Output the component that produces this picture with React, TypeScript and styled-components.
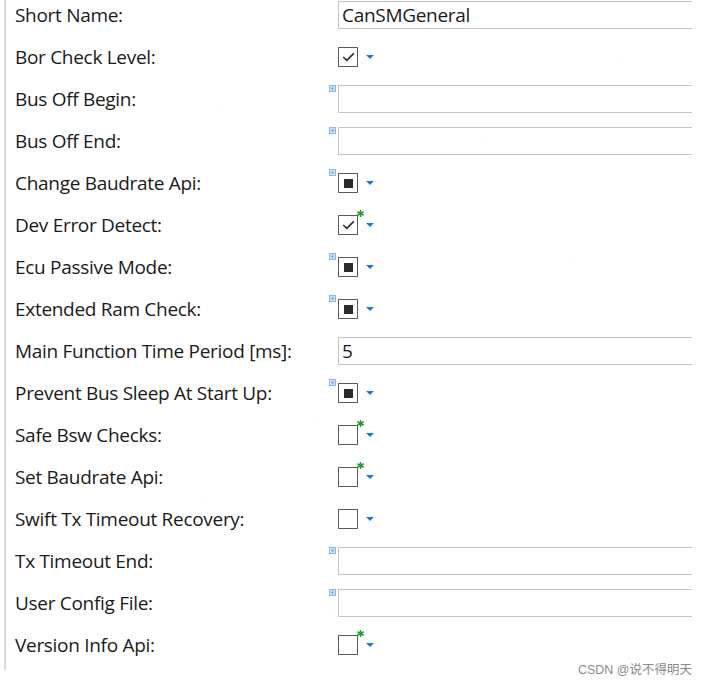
import { createGlobalStyle, styled } from "styled-components";

const GlobalStyle = createGlobalStyle`
    html, body {
        margin: 0;
        padding: 0;
        background: #ffffff;
    }
    body {
        font-family: "Open Sans", "Noto Sans", "Noto Sans CJK SC", sans-serif;
        color: #1a1a1a;
    }
`;

const Page = styled.div`
    position: relative;
    width: 702px;
    height: 684px;
    overflow: hidden;
    background: #ffffff;
`;

const Panel = styled.div`
    margin-left: 4px;
    margin-top: -6px;
    border-left: 2px solid #d9d9d9;
    height: 676px;
    display: flex;
    flex-direction: column;
`;

const Row = styled.div`
    height: 42px;
    display: grid;
    grid-template-columns: 332px 354px;
    align-items: center;
`;

const Label = styled.span`
    padding-left: 9px;
    font-size: 19px;
    letter-spacing: -0.3px;
    white-space: nowrap;
`;

const Cell = styled.div`
    position: relative;
    display: flex;
    align-items: center;
    height: 100%;
`;

const TextBox = styled.div`
    box-sizing: border-box;
    width: 354px;
    height: 28px;
    border: 1px solid #c4c4c4;
    border-right: none;
    padding-left: 3px;
    display: flex;
    align-items: center;
    font-size: 19px;
    letter-spacing: -0.3px;
`;

const Box = styled.div`
    position: relative;
    box-sizing: border-box;
    width: 20px;
    height: 20px;
    border: 1.7px solid #5a5a5a;
    display: flex;
    align-items: center;
    justify-content: center;
`;

const Filled = styled.div`
    width: 9px;
    height: 9px;
    background: #2b2b2b;
`;

const Arrow = styled.span`
    margin-left: 8px;
    width: 0;
    height: 0;
    border-left: 4px solid transparent;
    border-right: 4px solid transparent;
    border-top: 4.5px solid #1c78d4;
`;

const Marker = styled.svg`
    position: absolute;
    left: -9px;
    top: 7px;
    width: 7px;
    height: 7px;
`;

const BoxMarker = styled(Marker)`
    left: -10px;
    top: -5px;
`;

const Star = styled.svg`
    position: absolute;
    right: -7px;
    top: -6px;
    width: 7px;
    height: 7px;
`;

const Watermark = styled.span<{ $x: number; $y: number }>`
    position: absolute;
    left: ${(p) => p.$x}px;
    top: ${(p) => p.$y}px;
    font-size: 9px;
    color: rgba(0, 0, 0, 0.035);
    transform: rotate(-13deg);
    white-space: nowrap;
    font-family: "Open Sans", "Noto Sans CJK SC", sans-serif;
    pointer-events: none;
`;

const Credit = styled.span`
    position: absolute;
    right: 10px;
    bottom: 6px;
    font-size: 12.5px;
    color: #8a8a8a;
    font-family: "Liberation Sans", "Noto Sans CJK SC", sans-serif;
`;

type Check = "check" | "filled" | "empty";

type Field =
    | { label: string; kind: "text"; value?: string; marker?: boolean }
    | { label: string; kind: "bool"; state: Check; marker?: boolean; star?: boolean };

const fields: Field[] = [
    { label: "Short Name:", kind: "text", value: "CanSMGeneral" },
    { label: "Bor Check Level:", kind: "bool", state: "check" },
    { label: "Bus Off Begin:", kind: "text", marker: true },
    { label: "Bus Off End:", kind: "text", marker: true },
    { label: "Change Baudrate Api:", kind: "bool", state: "filled", marker: true },
    { label: "Dev Error Detect:", kind: "bool", state: "check", star: true },
    { label: "Ecu Passive Mode:", kind: "bool", state: "filled", marker: true },
    { label: "Extended Ram Check:", kind: "bool", state: "filled", marker: true },
    { label: "Main Function Time Period [ms]:", kind: "text", value: "5" },
    { label: "Prevent Bus Sleep At Start Up:", kind: "bool", state: "filled", marker: true },
    { label: "Safe Bsw Checks:", kind: "bool", state: "empty", star: true },
    { label: "Set Baudrate Api:", kind: "bool", state: "empty", star: true },
    { label: "Swift Tx Timeout Recovery:", kind: "bool", state: "empty" },
    { label: "Tx Timeout End:", kind: "text", marker: true },
    { label: "User Config File:", kind: "text", marker: true },
    { label: "Version Info Api:", kind: "bool", state: "empty", star: true },
];

const marks = [
    [250, 30], [520, 60], [120, 110], [380, 140],
    [240, 230], [470, 260], [80, 300], [350, 320],
    [210, 420], [460, 450], [100, 500], [360, 520],
    [230, 610], [470, 600],
];

function MarkerIcon() {
    return (
        <>
            <rect x="0.5" y="0.5" width="6" height="6" fill="#cfe1f7" stroke="#2f7fd8" strokeWidth="1" strokeDasharray="1 1" />
            <rect x="2.5" y="2.5" width="2" height="2" fill="#6aa6e8" />
        </>
    );
}

function StarIcon() {
    return (
        <g stroke="#1f9a2a" strokeWidth="1.5" strokeLinecap="round">
            <line x1="3.5" y1="0.5" x2="3.5" y2="6.5" />
            <line x1="0.8" y1="2" x2="6.2" y2="5" />
            <line x1="0.8" y1="5" x2="6.2" y2="2" />
        </g>
    );
}

function BoolValue({ state, marker, star }: { state: Check; marker?: boolean; star?: boolean }) {
    return (
        <Cell>
            <Box>
                {marker && (
                    <BoxMarker viewBox="0 0 7 7">
                        <MarkerIcon />
                    </BoxMarker>
                )}
                {state === "filled" && <Filled />}
                {state === "check" && (
                    <svg width="13" height="10" viewBox="0 0 13 10">
                        <polyline points="1.2,5 4.8,8.4 11.8,1.4" fill="none" stroke="#2e2e2e" strokeWidth="1.6" />
                    </svg>
                )}
                {star && (
                    <Star viewBox="0 0 7 7">
                        <StarIcon />
                    </Star>
                )}
            </Box>
            <Arrow />
        </Cell>
    );
}

export default function App() {
    return (
        <Page>
            <GlobalStyle />
            <Panel>
                {fields.map((f) => (
                    <Row key={f.label}>
                        <Label>{f.label}</Label>
                        {f.kind === "text" ? (
                            <Cell>
                                {f.marker && (
                                    <Marker viewBox="0 0 7 7">
                                        <MarkerIcon />
                                    </Marker>
                                )}
                                <TextBox>{f.value}</TextBox>
                            </Cell>
                        ) : (
                            <BoolValue state={f.state} marker={f.marker} star={f.star} />
                        )}
                    </Row>
                ))}
            </Panel>
            {marks.map(([x, y], i) => (
                <Watermark key={i} $x={x} $y={y}>
                    robert.liu 2024年12月12日 15:10
                </Watermark>
            ))}
            <Credit>CSDN @说不得明天</Credit>
        </Page>
    );
}
